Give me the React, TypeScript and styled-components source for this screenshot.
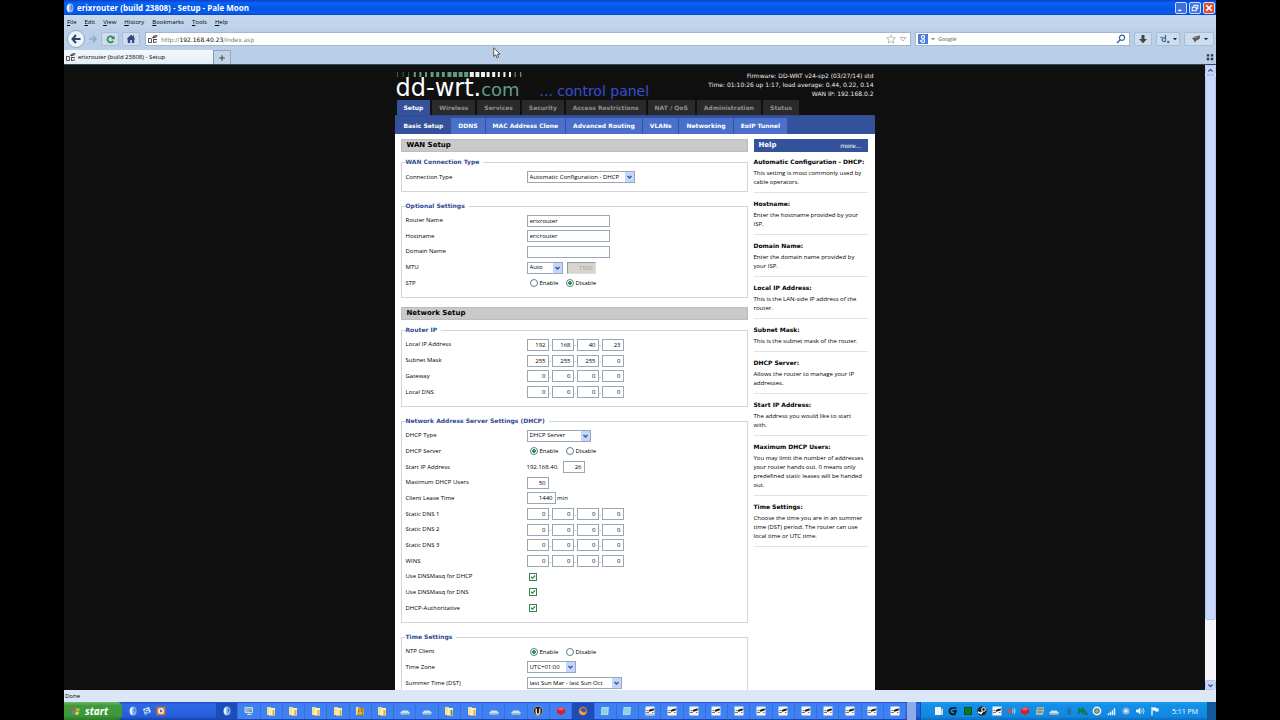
import React from "react";
import styled, { createGlobalStyle, css } from "styled-components";

const ui = `"Open Sans", "DejaVu Sans Condensed", sans-serif`;
const wide = `"DejaVu Sans", sans-serif`;

const GlobalStyle = createGlobalStyle`
  * { box-sizing: border-box; }
  body { margin: 0; background: #000; font-family: ${ui}; font-size: 6px; line-height: 9px; color: #000; }
  button, input, select { font: inherit; color: inherit; margin: 0; padding: 0; border: 0; border-radius: 0; background: none; }
  h1, h2, h3, p, ul { margin: 0; padding: 0; font-size: inherit; font-weight: inherit; list-style: none; }
  a { color: inherit; text-decoration: none; }
  svg { display: block; flex: none; }
`;

/* ---------- window frame ---------- */

const Screen = styled.div`
  position: relative;
  display: flex;
  flex-direction: column;
  height: 100vh;
  margin: 0 5%;
  overflow: hidden;
  background: #b9cfe8;
`;

const TitleBar = styled.header`
  display: flex;
  align-items: center;
  gap: 2px;
  flex: none;
  height: 15px;
  padding: 0 1px 0 1px;
  color: #fff;
  background: linear-gradient(#0a3fd0, #0a62f0 20%, #0054e6 60%, #0a5cf4 85%, #0646c4);
`;

const WindowTitle = styled.h1`
  flex: 1;
  font: bold 8px/14px "Open Sans", sans-serif;
`;

const CaptionButton = styled.button<{ $close?: boolean }>`
  display: grid;
  place-items: center;
  width: 12px;
  height: 12px;
  border: 1px solid #cfdcff;
  border-radius: 2px;
  background: ${(p) => (p.$close ? "#d8502c" : "#3c6fe0")};
`;

const MenuBar = styled.nav`
  display: flex;
  flex: none;
  gap: 8px;
  height: 14px;
  padding: 2px 3px;
  background: linear-gradient(#c6d8ec, #bdd2ea);
`;

const MenuItem = styled.button`
  line-height: 9px;
  &::first-letter { text-decoration: underline; }
`;

const NavBar = styled.div`
  display: flex;
  align-items: center;
  flex: none;
  gap: 4px;
  height: 20px;
  padding: 0 2px 0 3px;
`;

const NavButtons = styled.div`
  display: flex;
  align-items: center;
  gap: 3px;
  width: 74px;
`;

const RoundButton = styled.button`
  display: grid;
  place-items: center;
  width: 18px;
  height: 18px;
  border: 1px solid #8fa5c0;
  border-radius: 50%;
  background: #eef4fb;
`;

const ToolButton = styled.button<{ $w: number; $flat?: boolean }>`
  display: flex;
  align-items: center;
  justify-content: center;
  gap: 3px;
  width: ${(p) => p.$w}px;
  height: 14px;
  ${(p) => !p.$flat && css`
    border: 1px solid #a9bdd6;
    border-radius: 2px;
    background: #cddcee;
  `}
`;

const Field = styled.div<{ $w?: number }>`
  display: flex;
  align-items: center;
  gap: 3px;
  ${(p) => (p.$w ? `width: ${p.$w}px; flex: none;` : "flex: 1;")}
  height: 14px;
  padding: 0 3px 0 2px;
  border: 1px solid #a3b7d0;
  background: #fff;
`;

const Url = styled.div`
  flex: 1;
  font-family: ${wide};
  color: #777;
  b { font-weight: normal; color: #111; }
`;

const SearchInput = styled.input`
  flex: 1;
  min-width: 0;
  outline: 0;
  font-style: italic;
  &::placeholder { color: #555; opacity: 1; }
`;

const TabStrip = styled.div`
  display: flex;
  align-items: flex-end;
  flex: none;
  height: 16px;
  padding-right: 2px;
  border-bottom: 1px solid #2f4a5a;
`;

const BrowserTab = styled.button`
  display: flex;
  align-items: center;
  gap: 2px;
  width: 150px;
  height: 14px;
  padding: 0 2px;
  border-right: 1px solid #8096b0;
  background: linear-gradient(#f4f8fd, #e4edf8);
`;

const NewTab = styled.button`
  display: grid;
  place-items: center;
  width: 17px;
  height: 14px;
  border: 1px solid #93a7c0;
  border-width: 1px 1px 0 0;
  background: #c3d4e8;
`;

const TabGrid = styled.button`
  margin-left: auto;
  height: 14px;
`;

const Viewport = styled.main`
  display: flex;
  flex: 1;
  min-height: 0;
  background: #101010;
`;

const Canvas = styled.div`
  flex: 1;
  min-width: 0;
  overflow: hidden;
`;

const ScrollBar = styled.div`
  display: flex;
  flex-direction: column;
  width: 11px;
  background: #f4f5fb;
`;

const ScrollButton = styled.button`
  display: grid;
  place-items: center;
  height: 10px;
  border: 1px solid #b4c6f0;
  border-radius: 2px;
  background: #c8d7fb;
`;

const ScrollThumb = styled.div`
  flex: 9;
  border: 1px solid #b4c6f0;
  border-radius: 2px;
  background: #c8d7fb;
`;

const ScrollRest = styled.div`
  flex: 1;
`;

const StatusBar = styled.footer`
  flex: none;
  height: 12px;
  padding: 2px 1px;
  background: #dbe7f6;
`;

/* ---------- router page ---------- */

const Page = styled.div`
  max-width: 480px;
  min-height: 100%;
  margin: 0 auto;
  background: #fff;
`;

const Masthead = styled.div`
  display: flex;
  justify-content: space-between;
  height: 34px;
  padding: 6px 1px 0;
  background: #101010;
`;

const Brand = styled.div`
  display: flex;
  align-items: flex-end;
  gap: 18px;
`;

const Logo = styled.a`
  display: flex;
  flex-direction: column;
  width: 126px;
  height: 27px;
  color: #fff;
  font-family: ${wide};
`;

const LogoText = styled.span`
  font-size: 24px;
  line-height: 23px;
  white-space: nowrap;
  small { font-size: 18px; color: #5f9c86; }
`;

const Tagline = styled.span`
  font: 14px/14px ${wide};
  color: #3550d0;
  padding-bottom: 1px;
`;

const RouterInfo = styled.div`
  text-align: right;
  color: #eee;
  font-family: ${wide};
`;

const MainTabs = styled.nav`
  display: flex;
  gap: 2px;
  height: 17px;
  padding: 1px 2px 0;
  background: #101010;
  border-bottom: 1px solid #2b4a92;
`;

const MainTab = styled.a<{ $on?: boolean }>`
  padding: 0 7px;
  font: bold 6px/16px ${wide};
  color: ${(p) => (p.$on ? "#fff" : "#8f8f8f")};
  background: ${(p) => (p.$on ? "#34529c" : "#2a2a2a")};
`;

const SubTabs = styled.nav`
  display: flex;
  gap: 1px;
  height: 18px;
  padding: 2px 2px 0;
  background: #34529c;
`;

const SubTab = styled.a<{ $on?: boolean }>`
  padding: 0 7px;
  font: bold 6px/16px ${wide};
  color: #fff;
  background: ${(p) => (p.$on ? "#34529c" : "#4a70cc")};
`;

const Columns = styled.div`
  display: grid;
  grid-template-columns: 1fr 114px;
  gap: 6px;
  padding: 4px 7px 0 6px;
`;

const SectionTitle = styled.h2`
  height: 13px;
  margin: 1px 0 5px;
  padding-left: 5px;
  border: 1px solid #bdbdbd;
  background: #c9c9c9;
  font: bold 7px/11px ${wide};
`;

const Group = styled.fieldset`
  min-width: 0;
  margin: 0 0 9px;
  padding: 2px 4px 6px;
  border: 1px solid #d4d4d4;
`;

const Legend = styled.legend`
  padding: 0 4px 0 0;
  font: bold 6px/10px ${wide};
  color: #2f4a92;
`;

const Rows = styled.div<{ $h: number }>`
  display: grid;
  grid-auto-rows: 1fr;
  min-height: ${(p) => p.$h}px;
`;

const RowBox = styled.div`
  display: flex;
  align-items: center;
`;

const RowLabel = styled.label`
  width: 121px;
`;

const Value = styled.div`
  display: flex;
  align-items: center;
`;

const TextBox = styled.input<{ $w: number; $right?: boolean }>`
  width: ${(p) => p.$w}px;
  height: 12px;
  padding: 0 2px;
  border: 1px solid #98a8b4;
  background: #fff;
  text-align: ${(p) => (p.$right ? "right" : "left")};
  &:disabled { background: #d8d5cc; color: #999; border-color: #999 #ddd #ddd #999; }
`;

const Dot = styled.span`
  width: 3px;
  text-align: center;
`;

const IpPrefix = styled.span`
  width: 36px;
`;

const SelectBox = styled.span<{ $w: number }>`
  display: flex;
  align-items: center;
  width: ${(p) => p.$w}px;
  height: 12px;
  margin-right: 4px;
  border: 1px solid #98a8b4;
  background: linear-gradient(#c5d5fb, #c5d5fb) right / 9px 100% no-repeat #fff;
  select { flex: 1; min-width: 0; appearance: none; padding-left: 2px; outline: 0; height: 10px; margin-right: -9px; }
  svg { pointer-events: none; margin-right: 1px; }
`;

const Option = styled.label`
  display: flex;
  align-items: center;
  width: 36px;
  padding-left: 3px;
  span { padding: 1px 0 0 2px; }
`;

const Radio = styled.input`
  appearance: none;
  width: 8px;
  height: 8px;
  border: 1px solid #5b7a94;
  border-radius: 50%;
  background: #fff;
  &:checked { background: radial-gradient(circle, #2f9a3c 0 2px, #fff 2px); }
`;

const CheckBox = styled.span`
  display: grid;
  padding-left: 2px;
  input { appearance: none; grid-area: 1 / 1; width: 8px; height: 8px; border: 1px solid #3f7a5c; background: #fff; }
  svg { grid-area: 1 / 1; pointer-events: none; }
`;

const HelpHead = styled.h2`
  display: flex;
  justify-content: space-between;
  height: 13px;
  margin: 1px 0 5px;
  padding: 0 6px 0 5px;
  background: #34529c;
  color: #fff;
  font: bold 7px/13px ${wide};
  a { font: 6px/13px ${wide}; }
`;

const HelpItem = styled.section`
  margin-bottom: 6px;
  padding-bottom: 5px;
  border-bottom: 1px solid #e2e2e2;
  h3 { margin-bottom: 3px; font: bold 6px/9px ${wide}; white-space: nowrap; }
  p { white-space: pre; }
`;

/* ---------- task bar ---------- */

const TaskBar = styled.footer`
  display: flex;
  flex: none;
  height: 18px;
  background: linear-gradient(#1c50c4, #2f6ae6 15%, #245edb 80%, #1941a5);
`;

const Start = styled.button`
  display: flex;
  align-items: center;
  gap: 4px;
  width: 58px;
  padding-left: 7px;
  border-radius: 0 5px 5px 0;
  background: linear-gradient(#6fb66a, #3f9a3c 20%, #3c9838 75%, #2c7a28);
  color: #fff;
  font: italic bold 10px/16px "Open Sans", sans-serif;
`;

const QuickLaunch = styled.div`
  display: flex;
  align-items: center;
  gap: 4px;
  width: 94px;
  padding-left: 6px;
`;

const Tasks = styled.div`
  display: flex;
  flex: 1;
  min-width: 0;
`;

const Task = styled.button<{ $on?: boolean }>`
  display: grid;
  place-items: center;
  flex: 1;
  min-width: 0;
  margin: 1px 0;
  border-right: 1px solid #346fe0;
  background: ${(p) => (p.$on ? "#1c4cb8" : "#3f80f2")};
`;

const Grip = styled.div`
  width: 9px;
  margin: 0 4px 0 1px;
  background: #8fabe4;
`;

const Tray = styled.div`
  display: flex;
  align-items: center;
  width: 296px;
  padding-left: 13px;
  border-left: 1px solid #0a4fb0;
  background: linear-gradient(#1a9aec, #1290e8 20%, #1288e0 80%, #0c6cc0);
  color: #fff;
`;

const TrayIcons = styled.div`
  display: flex;
  flex: 1;
  justify-content: space-between;
  margin-right: 3px;
`;

const Clock = styled.time`
  width: 44px;
  text-align: center;
  font-size: 7px;
`;

const Desk = styled.div`
  width: 9px;
  height: 100%;
  background: #14589c;
`;

const Pointer = styled.svg`
  position: absolute;
  left: calc(50% - 147px);
  top: 47px;
`;

/* ---------- icons ---------- */

const Ico = ({ s = 10, children }: { s?: number; children: React.ReactNode }) => (
  <svg width={s} height={s} viewBox="0 0 10 10" aria-hidden="true">{children}</svg>
);

const GlobeIcon = ({ s }: { s?: number }) => (
  <Ico s={s}>
    <ellipse cx="5" cy="5" rx="3.6" ry="4.5" fill="#7fb0ea" />
    <path d="M5 .8C3 1 1.8 3 1.8 5s1 4 3 4.2C4 7.500 3.600 3 5 .8z" fill="#e8f2fd" />
    <path d="M6 2l1.500 2-1 3z" fill="#3c6cb8" />
  </Ico>
);

const RouterIcon = ({ s }: { s?: number }) => (
  <Ico s={s}>
    <path d="M0 4.500h3.500M.5 5v3.500h3V5M5.500 5v4M5 5.500h4M5 8.500h2M8 7v2" stroke="#555" fill="none" />
    <path d="M4 3.500l2-2 3-.6L9.500 2.500 7 4 5 4.300z" fill="#444" />
    <path d="M6.500 2.500l2-.3" stroke="#bbb" strokeWidth=".8" />
  </Ico>
);

const FolderIcon = ({ lock, doc }: { lock?: boolean; doc?: boolean }) => (
  <Ico>
    <path d="M1 1h3.500l1 1V9H1z" fill="#f7e08a" />
    <path d="M4 2h5v7.500H3z" fill={lock ? "#c98a2a" : "#fbf0b4"} />
    <path d="M6.500 4h2v5h-2z" fill={doc ? "#5f9a5a" : "#d9b24a"} />
    {lock && <path d="M3.500 5V3a1.500 1.500 0 013 0v2M3 5h4.500v4H3z" fill="#e8b23c" stroke="#7a5a1a" strokeWidth=".6" />}
  </Ico>
);

const DriveIcon = () => (
  <Ico>
    <path d="M.5 6.500L2.500 4.500h5l2 2v1l-1 1.200h-7L.5 7.500z" fill="#d4e0ee" />
    <path d="M1 7.200h8l-1 1.500H2z" fill="#8fa6c4" />
    <path d="M6.500 7.600h1.500v.8H6.500z" fill="#6fca5a" />
  </Ico>
);

const NoteIcon = () => (
  <Ico>
    <path d="M1.500 1h7.500l-.8 8H.8z" fill="#a8dcec" />
    <path d="M2.500 3h5M2.300 5h5M2.100 7h5" stroke="#5fb0cc" strokeWidth=".6" />
  </Ico>
);

const ScriptIcon = ({ dots }: { dots?: boolean }) => (
  <Ico>
    <path d="M.5 .5h9v9h-9z" fill="#f6f6f4" />
    <path d="M3.500 4.200L6 3l3.500-.6L8.500 4.500 6 5.300l-2 .5z" fill="#222" />
    <path d="M1 6.500h3M7 6.500h1.500M1.500 4.500h1.500" stroke="#666" strokeWidth=".9" />
    {dots && <path d="M1.500 8.300h7" stroke="#4f7a5a" strokeDasharray="1 1" />}
  </Ico>
);

const RedIcon = () => (
  <Ico>
    <path d="M1 3l4-2 4 2v4L5 9 1 7z" fill="#d4202a" />
    <path d="M1 3l4 1.500L9 3 5 1.200z" fill="#f4606a" />
  </Ico>
);

const FirefoxIcon = () => (
  <Ico>
    <circle cx="5" cy="5" r="4.200" fill="#e8782a" />
    <circle cx="5.300" cy="4.300" r="2.600" fill="#3c5aa8" />
    <path d="M1 4c1 1 2 .5 3 1.500S7 7 8.500 6C8 8.500 5.500 9.500 3.500 8.700 1.500 8 .8 6 1 4z" fill="#f2a23c" />
  </Ico>
);

const UnrealIcon = () => (
  <Ico>
    <circle cx="5" cy="5" r="4.600" fill="#1a1a1a" stroke="#c8c8b8" strokeWidth=".6" />
    <path d="M3.200 2.500v4a1.800 1.800 0 003.600 0v-4" fill="none" stroke="#eee8c8" strokeWidth="1.400" />
  </Ico>
);

const MonitorIcon = () => (
  <Ico>
    <path d="M1 1.500h7.500v5H1z" fill="#8fb4c8" stroke="#dfe8ee" strokeWidth=".8" />
    <path d="M3 8.500h5M5 7v1.500" stroke="#cfd8e0" />
    <path d="M5.500 4h2v2h-2z" fill="#5fa05a" />
  </Ico>
);

const IeIcon = () => (
  <Ico>
    <path d="M1 3l6-2 2 5-6 3z" fill="#d8eaf8" />
    <path d="M2.500 5.500a2.300 2.300 0 014-1.500M3 6.800c1.500 1 3 .3 4-.8M3 5.400h4" stroke="#2a78c8" fill="none" />
  </Ico>
);

const PlayerIcon = () => (
  <Ico>
    <rect x=".5" y=".8" width="8.800" height="8.400" rx="1" fill="#e0742a" />
    <circle cx="5" cy="5" r="3" fill="#f4f0e4" />
    <path d="M4 3.300v3.400L7 5z" fill="#3c6cb8" />
  </Ico>
);

const SpeakerIcon = ({ c = "#fff" }: { c?: string }) => (
  <Ico>
    <path d="M1 3.700h1.800L5.300 1.500v7L2.800 6.300H1z" fill={c} />
    <path d="M6.500 3.300q1.200 1.700 0 3.400M8 2q2.200 3 0 6" stroke="#e4eef8" strokeWidth=".8" fill="none" />
  </Ico>
);

const Chevron = () => (
  <svg width="7" height="8" viewBox="0 0 7 8" aria-hidden="true">
    <path d="M1.500 3l2 2 2-2" fill="none" stroke="#3c5a98" strokeWidth="1.500" />
  </svg>
);

const Caret = ({ c = "#222" }: { c?: string }) => (
  <svg width="4" height="4" viewBox="0 0 4 4" aria-hidden="true"><path d="M0 1h4L2 3.200z" fill={c} /></svg>
);

/* ---------- form pieces ---------- */

const Row = ({ label, id, children }: { label: string; id: string; children: React.ReactNode }) => (
  <RowBox>
    <RowLabel htmlFor={id}>{label}</RowLabel>
    <Value>{children}</Value>
  </RowBox>
);

const IpRow = ({ label, id, ip = [0, 0, 0, 0] }: { label: string; id: string; ip?: number[] }) => (
  <Row label={label} id={id}>
    {ip.map((n, i) => (
      <React.Fragment key={i}>
        {i > 0 && <Dot>.</Dot>}
        <TextBox $w={22} $right id={i ? undefined : id} aria-label={`${label} ${i + 1}`} defaultValue={n} />
      </React.Fragment>
    ))}
  </Row>
);

const Toggle = ({ label, id, on }: { label: string; id: string; on: boolean }) => (
  <Row label={label} id={id}>
    <Option><Radio type="radio" name={id} id={id} defaultChecked={on} /><span>Enable</span></Option>
    <Option><Radio type="radio" name={id} defaultChecked={!on} /><span>Disable</span></Option>
  </Row>
);

const Drop = ({ id, w, value }: { id: string; w: number; value: string }) => (
  <SelectBox $w={w}>
    <select id={id} defaultValue={value}><option>{value}</option></select>
    <Chevron />
  </SelectBox>
);

const CheckRow = ({ label, id }: { label: string; id: string }) => (
  <Row label={label} id={id}>
    <CheckBox>
      <input type="checkbox" id={id} defaultChecked />
      <svg width="8" height="8" viewBox="0 0 8 8" aria-hidden="true">
        <path d="M2 3.700l1.500 1.600L6 2.500" fill="none" stroke="#2f9a3c" strokeWidth="1.300" />
      </svg>
    </CheckBox>
  </Row>
);

const LogoBars = () => (
  <svg width="126" height="5" viewBox="0 0 126 5" aria-hidden="true">
    {Array.from({ length: 23 }, (_, i) => {
      const w = i < 3 || i > 20 ? 1 : i > 8 && i < 16 ? 4 : i > 5 && i < 18 ? 3 : 2;
      return <rect key={i} x={1 + i * 5.600} y="0" width={w} height="5" fill={i < 13 ? (i < 3 ? "#3f5f55" : "#5f9c86") : i > 20 ? "#999" : "#f0f0f0"} />;
    })}
  </svg>
);

const mainTabs = ["Setup", "Wireless", "Services", "Security", "Access Restrictions", "NAT / QoS", "Administration", "Status"];
const subTabs = ["Basic Setup", "DDNS", "MAC Address Clone", "Advanced Routing", "VLANs", "Networking", "EoIP Tunnel"];

const help: [string, string][] = [
  ["Automatic Configuration - DHCP:", "This setting is most commonly used by\ncable operators."],
  ["Hostname:", "Enter the hostname provided by your\nISP."],
  ["Domain Name:", "Enter the domain name provided by\nyour ISP."],
  ["Local IP Address:", "This is the LAN-side IP address of the\nrouter."],
  ["Subnet Mask:", "This is the subnet mask of the router."],
  ["DHCP Server:", "Allows the router to manage your IP\naddresses."],
  ["Start IP Address:", "The address you would like to start\nwith."],
  ["Maximum DHCP Users:", "You may limit the number of addresses\nyour router hands out. 0 means only\npredefined static leases will be handed\nout."],
  ["Time Settings:", "Choose the time you are in an summer\ntime (DST) period. The router can use\nlocal time or UTC time."],
];

const taskIcons: [string, React.ReactNode][] = [
  ["Pale Moon", <GlobeIcon />],
  ["Computer", <MonitorIcon />],
  ...Array.from({ length: 4 }, (_, i): [string, React.ReactNode] => [`Folder ${i + 1}`, <FolderIcon />]),
  ["Locked folder", <FolderIcon lock />],
  ["Folder 5", <FolderIcon />],
  ["Drive 1", <DriveIcon />],
  ["Drive 2", <DriveIcon />],
  ["Documents", <FolderIcon doc />],
  ["Folder 6", <FolderIcon />],
  ["Drive 3", <DriveIcon />],
  ["Drive 4", <DriveIcon />],
  ["Editor", <UnrealIcon />],
  ["Package", <RedIcon />],
  ["Firefox", <FirefoxIcon />],
  ["Note 1", <NoteIcon />],
  ["Note 2", <NoteIcon />],
  ["Image", <ScriptIcon dots />],
  ...Array.from({ length: 11 }, (_, i): [string, React.ReactNode] => [`Script ${i + 1}`, <ScriptIcon />]),
];

export default function App() {
  return (
    <>
      <GlobalStyle />
      <Screen>
        <TitleBar>
          <GlobeIcon />
          <WindowTitle>erixrouter (build 23808) - Setup - Pale Moon</WindowTitle>
          <CaptionButton aria-label="Minimize"><Ico s={8}><path d="M1.500 7h4v2h-4z" fill="#fff" /></Ico></CaptionButton>
          <CaptionButton aria-label="Restore"><Ico s={8}><path d="M3.500 3V1.500h5v4H7M1.500 4h5v4.500h-5z" fill="none" stroke="#fff" strokeWidth="1.300" /></Ico></CaptionButton>
          <CaptionButton $close aria-label="Close"><Ico s={8}><path d="M1.500 1.500l7 7m0-7l-7 7" stroke="#fff" strokeWidth="2" /></Ico></CaptionButton>
        </TitleBar>
        <MenuBar>
          {["File", "Edit", "View", "History", "Bookmarks", "Tools", "Help"].map((m) => <MenuItem key={m}>{m}</MenuItem>)}
        </MenuBar>
        <NavBar>
          <NavButtons>
            <RoundButton aria-label="Back"><Ico><path d="M5 1L1.500 5 5 9M1.800 5H9.500" fill="none" stroke="#2a4668" strokeWidth="2" /></Ico></RoundButton>
            <ToolButton $w={10} $flat aria-label="Forward"><Ico s={8}><path d="M5 1l3.500 4L5 9M8.200 5H.5" fill="none" stroke="#8fa8c4" strokeWidth="2" /></Ico></ToolButton>
            <ToolButton $w={18} aria-label="Reload"><Ico s={9}><path d="M8 6.500A3.400 3.400 0 118 3.200" fill="none" stroke="#2f8a3c" strokeWidth="1.800" /><path d="M9.500.8v4h-4z" fill="#2f8a3c" /></Ico></ToolButton>
            <ToolButton $w={18} aria-label="Home"><Ico><path d="M5 .8L.5 5.200h1.300V9h2.300V6h1.800v3h2.300V5.200h1.300L8 3.700V1.500H6.800v1z" fill="#2f4a7c" /></Ico></ToolButton>
          </NavButtons>
          <Field>
            <RouterIcon />
            <Url>http://<b>192.168.40.23</b>/index.asp</Url>
            <Ico><path d="M5 .8l1.300 2.800 3 .3L7 6l.7 3L5 7.500 2.300 9 3 6 .7 3.900l3-.3z" fill="none" stroke="#aaa" strokeWidth=".8" /></Ico>
            <Ico s={8}><path d="M1.500 3h7L5 7.500z" fill="none" stroke="#aaa" /></Ico>
          </Field>
          <Field $w={215}>
            <Ico><path d="M0 0h10v10H0z" fill="#4a7ed8" /><path d="M5 4.500a1.500 1.500 0 110-3 1.500 1.500 0 010 3zM6.500 1.500h-1M5 4.500q2 1 1.500 2.800T3.500 8 5 5.800" fill="none" stroke="#fff" strokeWidth="1.100" /></Ico>
            <Caret c="#888" />
            <SearchInput aria-label="Search" placeholder="Google" />
            <Ico><circle cx="6" cy="3.800" r="2.600" fill="none" stroke="#3c6a9c" strokeWidth="1.200" /><path d="M4.200 5.800L1 9" stroke="#3c6a9c" strokeWidth="1.600" /></Ico>
          </Field>
          <ToolButton $w={18} aria-label="Downloads"><Ico><path d="M3.500 1h3v4h2.500L5 9.300 1 5h2.500z" fill="#444" /></Ico></ToolButton>
          <ToolButton $w={24} aria-label="Add-on"><Ico><path d="M.5 3.500l2-.5M5.500 1v6.500M5.500 4.500a1.900 1.900 0 100 2.500" fill="none" stroke="#3c6a9c" strokeWidth="1.200" /><circle cx="8.300" cy="8" r="1.200" fill="#3c6a9c" /></Ico><Caret /></ToolButton>
          <ToolButton $w={30} aria-label="Add-on menu"><Ico><path d="M1 4.500L4 2.500l5-1L8.500 5 6 6 3.500 8.500 3 6z" fill="#555" /><path d="M3 4l4-.8" stroke="#999" /></Ico><Caret /></ToolButton>
        </NavBar>
        <TabStrip>
          <BrowserTab><RouterIcon />erixrouter (build 23808) - Setup</BrowserTab>
          <NewTab aria-label="New tab"><Ico s={8}><path d="M5 1.500v7M1.500 5h7" stroke="#444" strokeWidth="1.300" /></Ico></NewTab>
          <TabGrid aria-label="Tab groups"><Ico s={8}><path d="M1 1.500h3v3H1zM6 1.500h3v3H6zM1 6h3v3H1zM6 6h3v3H6z" fill="#333" /></Ico></TabGrid>
        </TabStrip>

        <Viewport>
          <Canvas>
            <Page>
              <Masthead>
                <Brand>
                  <Logo href="#">
                    <LogoBars />
                    <LogoText>dd-wrt.<small>com</small></LogoText>
                  </Logo>
                  <Tagline>... control panel</Tagline>
                </Brand>
                <RouterInfo>
                  <p>Firmware: DD-WRT v24-sp2 (03/27/14) std</p>
                  <p>Time: 01:10:26 up 1:17, load average: 0.44, 0.22, 0.14</p>
                  <p>WAN IP: 192.168.0.2</p>
                </RouterInfo>
              </Masthead>
              <MainTabs>{mainTabs.map((t, i) => <MainTab key={t} href="#" $on={i === 0}>{t}</MainTab>)}</MainTabs>
              <SubTabs>{subTabs.map((t, i) => <SubTab key={t} href="#" $on={i === 0}>{t}</SubTab>)}</SubTabs>
              <Columns>
                <form>
                  <SectionTitle>WAN Setup</SectionTitle>
                  <Group>
                    <Legend>WAN Connection Type</Legend>
                    <Rows $h={16}>
                      <Row label="Connection Type" id="conn"><Drop id="conn" w={108} value="Automatic Configuration - DHCP" /></Row>
                    </Rows>
                  </Group>
                  <Group>
                    <Legend>Optional Settings</Legend>
                    <Rows $h={78}>
                      <Row label="Router Name" id="rname"><TextBox $w={83} id="rname" defaultValue="erixrouter" /></Row>
                      <Row label="Hostname" id="host"><TextBox $w={83} id="host" defaultValue="ericrouter" /></Row>
                      <Row label="Domain Name" id="domain"><TextBox $w={83} id="domain" /></Row>
                      <Row label="MTU" id="mtu">
                        <Drop id="mtu" w={36} value="Auto" />
                        <TextBox $w={29} $right disabled aria-label="MTU size" defaultValue="1500" />
                      </Row>
                      <Toggle label="STP" id="stp" on={false} />
                    </Rows>
                  </Group>
                  <SectionTitle>Network Setup</SectionTitle>
                  <Group>
                    <Legend>Router IP</Legend>
                    <Rows $h={63}>
                      <IpRow label="Local IP Address" id="lan" ip={[192, 168, 40, 23]} />
                      <IpRow label="Subnet Mask" id="mask" ip={[255, 255, 255, 0]} />
                      <IpRow label="Gateway" id="gw" />
                      <IpRow label="Local DNS" id="ldns" />
                    </Rows>
                  </Group>
                  <Group>
                    <Legend>Network Address Server Settings (DHCP)</Legend>
                    <Rows $h={188}>
                      <Row label="DHCP Type" id="dtype"><Drop id="dtype" w={64} value="DHCP Server" /></Row>
                      <Toggle label="DHCP Server" id="dsrv" on />
                      <Row label="Start IP Address" id="start"><IpPrefix>192.168.40.</IpPrefix><TextBox $w={22} $right id="start" defaultValue="26" /></Row>
                      <Row label="Maximum DHCP Users" id="max"><TextBox $w={22} $right id="max" defaultValue="50" /></Row>
                      <Row label="Client Lease Time" id="lease"><TextBox $w={29} $right id="lease" defaultValue="1440" />&nbsp;min</Row>
                      <IpRow label="Static DNS 1" id="dns1" />
                      <IpRow label="Static DNS 2" id="dns2" />
                      <IpRow label="Static DNS 3" id="dns3" />
                      <IpRow label="WINS" id="wins" />
                      <CheckRow label="Use DNSMasq for DHCP" id="m1" />
                      <CheckRow label="Use DNSMasq for DNS" id="m2" />
                      <CheckRow label="DHCP-Authoritative" id="auth" />
                    </Rows>
                  </Group>
                  <Group>
                    <Legend>Time Settings</Legend>
                    <Rows $h={47}>
                      <Toggle label="NTP Client" id="ntp" on />
                      <Row label="Time Zone" id="tz"><Drop id="tz" w={49} value="UTC+01:00" /></Row>
                      <Row label="Summer Time (DST)" id="dst"><Drop id="dst" w={95} value="last Sun Mar - last Sun Oct" /></Row>
                    </Rows>
                  </Group>
                </form>
                <aside>
                  <HelpHead>Help<a href="#">more...</a></HelpHead>
                  {help.map(([t, d]) => <HelpItem key={t}><h3>{t}</h3><p>{d}</p></HelpItem>)}
                </aside>
              </Columns>
            </Page>
          </Canvas>
          <ScrollBar>
            <ScrollButton aria-label="Scroll up"><Ico s={7}><path d="M2 6.500l3-3 3 3" fill="none" stroke="#3c5a98" strokeWidth="2" /></Ico></ScrollButton>
            <ScrollThumb />
            <ScrollRest />
            <ScrollButton aria-label="Scroll down"><Ico s={7}><path d="M2 3.500l3 3 3-3" fill="none" stroke="#3c5a98" strokeWidth="2" /></Ico></ScrollButton>
          </ScrollBar>
        </Viewport>
        <StatusBar>Done</StatusBar>

        <TaskBar>
          <Start>
            <Ico><path d="M1.500 2q2-1.200 3.300-.3L4.300 4.800Q3 4 1 5z" fill="#e8542a" /><path d="M5.300 2q2 1 3.700 0L8.300 5q-2 1-3.500 0z" fill="#8fd04a" /><path d="M.9 5.500q2-1 3.300-.2L3.600 8.300Q2.300 7.500.3 8.500z" fill="#4a8af0" /><path d="M4.700 5.500q2 1 3.500 0L7.500 8.500q-2 1-3.400 0z" fill="#f4c83c" /></Ico>
            start
          </Start>
          <QuickLaunch><GlobeIcon /><IeIcon /><PlayerIcon /></QuickLaunch>
          <Tasks>{taskIcons.map(([name, icon], i) => <Task key={name} $on={i === 0 || i === 16} aria-label={name}>{icon}</Task>)}</Tasks>
          <Grip />
          <Tray>
            <TrayIcons>
              <Ico><path d="M1 1h6v8H1z" fill="#f4f4f0" /><path d="M7 4l2-2v7H7z" fill="#c8d0d8" /></Ico>
              <Ico><path d="M8.500 2H4Q1.500 2.500 1.500 5T4 8.300h2.500L8 5H4.500" fill="none" stroke="#111" strokeWidth="1.700" /></Ico>
              <Ico><path d="M1.500 1.500h7v7h-7z" fill="#0c7a1c" stroke="#0a4a2a" /></Ico>
              <Ico><circle cx="5" cy="5" r="4.600" fill="#222" /><circle cx="6.500" cy="3.500" r="1.900" fill="none" stroke="#fff" /><path d="M1 6l3 1.500 1.500-2" fill="none" stroke="#fff" strokeWidth="1.500" /></Ico>
              <ScriptIcon />
              <SpeakerIcon c="#d44a3c" />
              <RedIcon />
              <Ico><path d="M2 1h7v4l-1 4H1V5z" fill="#a8b8a8" /><path d="M3 3h5M2.500 6h5" stroke="#5a7a6a" /></Ico>
              <DriveIcon />
              <Ico><path d="M3 2l2 2 2-2M5 4v4M2.500 5h5M3 8l2-1.500L7 8" stroke="#2a6a8a" strokeWidth="1.200" fill="none" /></Ico>
              <Ico><path d="M1 8V3l3 3V2M5 8V3l2 2 2 3H6" fill="none" stroke="#0f7a4a" strokeWidth="1.700" /></Ico>
              <Ico><circle cx="5" cy="5" r="4.400" fill="#f4f4ec" /><circle cx="5" cy="5" r="2.200" fill="none" stroke="#3a6a5a" strokeWidth="1.200" /><path d="M4 5h2.500" stroke="#3a6a5a" /></Ico>
              <Ico><path d="M1 7.500h1V9H1zM3 6h1v3H3zM5 4.500h1V9H5zM7 2.500h1V9H7z" fill="#fff" stroke="#cfe4f8" strokeWidth=".6" /></Ico>
              <Ico><circle cx="5" cy="5" r="3.600" fill="#8fb4dc" /><circle cx="5" cy="5" r="1.600" fill="#e4f0fa" /></Ico>
              <SpeakerIcon />
              <Ico><path d="M2 1v8.500" stroke="#fff" strokeWidth="1.200" /><path d="M2.500 1.500h3.500l.5 1H9l-.8 1.500L9 5.500H5.500l-.5-1H2.500z" fill="#fff" /></Ico>
            </TrayIcons>
            <Clock>5:11 PM</Clock>
            <Desk />
          </Tray>
        </TaskBar>
        <Pointer width="8" height="12" viewBox="0 0 8 12" aria-hidden="true">
          <path d="M.7.8v8.700l2-1.800 1.400 3.200 1.500-.7L4.200 7.200H7z" fill="#fff" stroke="#333" strokeWidth=".8" />
        </Pointer>
      </Screen>
    </>
  );
}
